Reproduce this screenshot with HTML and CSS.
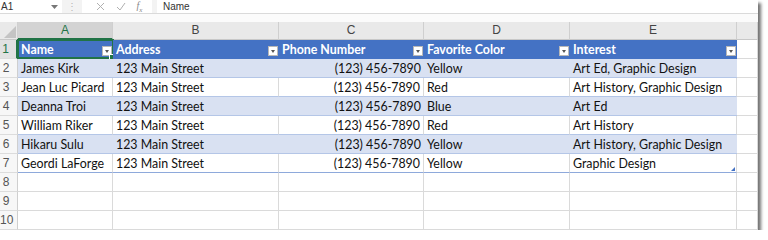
FILE: index.html
```html
<!DOCTYPE html>
<html>
<head>
<meta charset="utf-8">
<link rel="stylesheet" href="styles.css">
</head>
<body>
<div class="window">
  <div class="fbar">
    <div class="namebox"><span>A1</span><svg class="dd" width="7" height="4" viewBox="0 0 7 4"><path d="M0 0h7L3.5 4z" fill="#777"/></svg></div>
    <div class="grip">⋮</div>
    <div class="btns">
      <svg width="9" height="9" viewBox="0 0 9 9"><path d="M1 1l7 7M8 1l-7 7" stroke="#b0b0b0" stroke-width="1"/></svg>
      <svg width="10" height="9" viewBox="0 0 10 9"><path d="M1 5l3 3 5-7" stroke="#b0b0b0" stroke-width="1" fill="none"/></svg>
      <span class="fx">f<sub>x</sub></span>
    </div>
    <div class="formula">Name</div>
  </div>
  <div class="band"></div>
  <div class="sheet">
    <div class="corner"><svg width="14" height="14" viewBox="0 0 14 14"><path d="M14 2v12H2z" fill="#c4c4c4"/></svg></div>
    <div class="ch sel">A</div>
    <div class="ch">B</div>
    <div class="ch">C</div>
    <div class="ch">D</div>
    <div class="ch">E</div>
    <div class="ch"></div>

    <div class="rh sel">1</div>
    <div class="c th a1">Name<span class="flt"></span><span class="selbox"></span></div>
    <div class="c th">Address<span class="flt"></span></div>
    <div class="c th">Phone Number<span class="flt"></span></div>
    <div class="c th">Favorite Color<span class="flt"></span></div>
    <div class="c th">Interest<span class="flt"></span></div>
    <div class="c"></div>

    <div class="rh">2</div>
    <div class="c band1">James Kirk</div>
    <div class="c band1">123 Main Street</div>
    <div class="c band1 num">(123) 456-7890</div>
    <div class="c band1">Yellow</div>
    <div class="c band1">Art Ed, Graphic Design</div>
    <div class="c"></div>

    <div class="rh">3</div>
    <div class="c band2">Jean Luc Picard</div>
    <div class="c band2">123 Main Street</div>
    <div class="c band2 num">(123) 456-7890</div>
    <div class="c band2">Red</div>
    <div class="c band2">Art History, Graphic Design</div>
    <div class="c"></div>

    <div class="rh">4</div>
    <div class="c band1">Deanna Troi</div>
    <div class="c band1">123 Main Street</div>
    <div class="c band1 num">(123) 456-7890</div>
    <div class="c band1">Blue</div>
    <div class="c band1">Art Ed</div>
    <div class="c"></div>

    <div class="rh">5</div>
    <div class="c band2">William Riker</div>
    <div class="c band2">123 Main Street</div>
    <div class="c band2 num">(123) 456-7890</div>
    <div class="c band2">Red</div>
    <div class="c band2">Art History</div>
    <div class="c"></div>

    <div class="rh">6</div>
    <div class="c band1">Hikaru Sulu</div>
    <div class="c band1">123 Main Street</div>
    <div class="c band1 num">(123) 456-7890</div>
    <div class="c band1">Yellow</div>
    <div class="c band1">Art History, Graphic Design</div>
    <div class="c"></div>

    <div class="rh">7</div>
    <div class="c band2 last">Geordi LaForge</div>
    <div class="c band2 last">123 Main Street</div>
    <div class="c band2 last num">(123) 456-7890</div>
    <div class="c band2 last">Yellow</div>
    <div class="c band2 last endcell">Graphic Design<span class="resize"></span></div>
    <div class="c"></div>

    <div class="rh">8</div>
    <div class="c"></div><div class="c"></div><div class="c"></div><div class="c"></div><div class="c"></div><div class="c"></div>
    <div class="rh">9</div>
    <div class="c"></div><div class="c"></div><div class="c"></div><div class="c"></div><div class="c"></div><div class="c"></div>
    <div class="rh">10</div>
    <div class="c"></div><div class="c"></div><div class="c"></div><div class="c"></div><div class="c"></div><div class="c"></div>
  </div>
</div>
</body>
</html>
```

FILE: styles.css
```css
* { box-sizing: border-box; }
body { margin: 0; background: #fff; }
.window {
  width: 758px;
  height: 230px;
  background: #fff;
  overflow: hidden;
  box-shadow: 3px 3px 3px rgba(0,0,0,0.55);
  display: flex;
  flex-direction: column;
  font-family: Lato, "Liberation Sans", sans-serif;
}
.fbar {
  height: 14px;
  flex: none;
  display: flex;
  background: #f3f3f3;
  border-bottom: 1px solid #dadada;
  font-size: 10px;
  color: #333;
  font-family: "Liberation Sans", sans-serif;
}
.namebox {
  width: 62px;
  background: #fff;
  display: flex;
  align-items: center;
  justify-content: space-between;
  padding: 0 4px 0 1px;
}
.grip {
  width: 20px;
  text-align: center;
  color: #b5b5b5;
  font-size: 10px;
  line-height: 13px;
}
.btns {
  width: 70px;
  background: #fff;
  display: flex;
  align-items: center;
  justify-content: space-around;
  padding: 0 4px 0 8px;
}
.fx { font-family: "Liberation Serif", serif; font-style: italic; color: #888; font-size: 10px; }
.fx sub { font-size: 7px; }
.formula {
  flex: 1;
  margin-left: 5px;
  background: #fff;
  padding-left: 6px;
  line-height: 13px;
}
.band { height: 8px; flex: none; background: #fbfbfb; }
.sheet {
  display: grid;
  grid-template-columns: 18px 95px 166px 145px 146px 167px 21px;
  grid-template-rows: 18px repeat(10, 19px);
  font-size: 12.4px;
}
.corner {
  background: #e9e9e9;
  border-right: 1px solid #d0d0d0;
  border-bottom: 1px solid #c8c8c8;
  display: flex;
  align-items: flex-end;
  justify-content: flex-end;
  padding: 0 1px 1px 0;
}
.ch {
  background: #e9e9e9;
  border-right: 1px solid #cfcfcf;
  border-bottom: 1px solid #c8c8c8;
  text-align: center;
  line-height: 17px;
  color: #444;
  font-family: "Liberation Sans", sans-serif;
  font-size: 12px;
}
.ch.sel {
  background: #d3d3d3;
  color: #217346;
  border-bottom: 2px solid #217346;
  line-height: 17px;
}
.rh {
  background: #f7f7f7;
  border-right: 1px solid #cfcfcf;
  border-bottom: 1px solid #dcdcdc;
  color: #555;
  font-family: "Liberation Sans", sans-serif;
  font-size: 12px;
  line-height: 18px;
  padding-right: 5px;
  text-align: center;
}
.rh.sel {
  background: #e1e1e1;
  color: #217346;
  border-right: 2px solid #217346;
}
.c {
  position: relative;
  border-right: 1px solid #dadada;
  border-bottom: 1px solid #dadada;
  padding: 1px 3px 0;
  line-height: 17px;
  white-space: nowrap;
  color: #111;
}
.th {
  background: #4472c4;
  color: #fff;
  font-weight: bold;
  border-right: none;
  border-bottom: 1px solid #4472c4;
}
.flt {
  position: absolute;
  right: 1px;
  top: 6px;
  width: 10px;
  height: 10px;
  background: #fff;
  border: 1px solid #b8b8b8;
}
.flt::after {
  content: "";
  position: absolute;
  left: 2px;
  top: 3px;
  border-left: 2.5px solid transparent;
  border-right: 2.5px solid transparent;
  border-top: 3px solid #555;
}
.selbox {
  position: absolute;
  left: -1px;
  top: -1px;
  right: -1px;
  bottom: -1px;
  border: 2px solid #217346;
}
.selbox::after {
  content: "";
  position: absolute;
  right: -4px;
  bottom: -4px;
  width: 5px;
  height: 5px;
  background: #217346;
  border: 1px solid #fff;
}
.band1 {
  background: #d9e1f2;
  border-right: none;
  border-bottom: 1px solid #b4c6e7;
}
.band2 {
  background: #fff;
  border-bottom: 1px solid #b4c6e7;
}
.band2.last { border-bottom: 1px solid #8ea9db; }
.num { text-align: right; }
.resize {
  position: absolute;
  right: 1px;
  bottom: 1px;
  width: 0;
  height: 0;
  border-left: 4px solid transparent;
  border-bottom: 4px solid #4472c4;
}
```
